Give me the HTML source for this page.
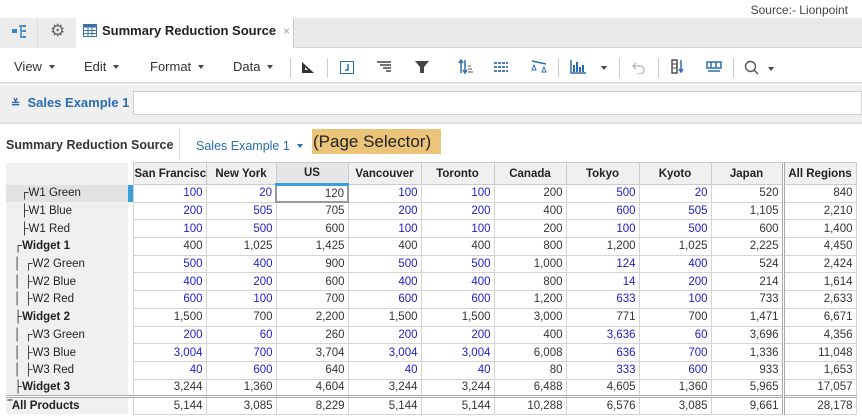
<!DOCTYPE html>
<html><head><meta charset="utf-8"><style>
*{box-sizing:border-box;margin:0;padding:0}
body{width:862px;height:418px;overflow:hidden;background:#fff;font-family:"Liberation Sans",Arial,sans-serif;position:relative;color:#333}
.abs{position:absolute}
.src{right:14px;top:3px;font-size:12px;color:#444}
.tabbar{left:0;top:18px;width:862px;height:30px;background:#e9e9e9;border-bottom:1px solid #d6d6d6}
.toolbar{left:0;top:48px;width:862px;height:36px;border-bottom:2px solid #e0e0e0;background:#fff}
.menu{top:59px;font-size:13px;color:#333}
.caret{display:inline-block;width:0;height:0;border-left:3.5px solid transparent;border-right:3.5px solid transparent;border-top:4px solid #444;margin-left:7px;vertical-align:2px}
.sep{top:58px;width:1px;height:20px;background:#ccc}
.bar2{left:0;top:85px;width:862px;height:39px;background:#efefef;border-bottom:2px solid #e0e0e0}
table{position:absolute;left:6px;top:162px;width:850px;border-collapse:collapse;font-size:11.5px;table-layout:fixed}
td{height:17.7px;padding:0 3px;text-align:right;border:1px solid #d4d4d4;white-space:nowrap;overflow:hidden;color:#333}
td.b{color:#2020c8}
td.l{text-align:left;background:#f0f0f0;border:none;color:#222;padding-left:8px}
tr.h td{background:#f0f0f0;font-weight:bold;text-align:center;height:22px;color:#222;border-color:#ccc;padding:0 1px}
td.w{font-weight:bold}
.ar{border-left:3px double #aaa !important}
</style></head><body>
<div class="abs src">Source:- Lionpoint</div>
<div class="abs tabbar"></div>
<div class="abs" style="left:0;top:18px;width:38px;height:30px;background:#ececec;border-right:1px solid #ddd"></div>
<svg class="abs" style="left:12px;top:25px" width="16" height="14"><rect x="0" y="4" width="5" height="4" fill="#3a86c8"/><path d="M7 1h4M9 1v12M9 6h3M9 12h3" stroke="#3a86c8" stroke-width="1.5" fill="none"/><rect x="11" y="0" width="3" height="2" fill="#3a86c8"/><rect x="11" y="5" width="3" height="2" fill="#3a86c8"/><rect x="11" y="11" width="3" height="2" fill="#3a86c8"/></svg>
<div class="abs" style="left:38px;top:18px;width:38px;height:30px;background:#ececec"></div>
<div class="abs" style="left:50px;top:21px;font-size:17px;color:#666">⚙</div>
<div class="abs" style="left:76px;top:18px;width:218px;height:31px;background:#fff;border-right:1px solid #ccc"></div>
<svg class="abs" style="left:83px;top:24px" width="14" height="13"><rect x="0.5" y="0.5" width="13" height="12" fill="#fff" stroke="#3a72b0"/><rect x="0.5" y="0.5" width="13" height="3" fill="#3a72b0"/><path d="M1 6.5h12M1 9.5h12M5 3v10M9 3v10" stroke="#3a72b0"/></svg>
<div class="abs" style="left:102px;top:23px;font-size:13px;font-weight:bold;color:#222">Summary Reduction Source <span style="color:#aaa;font-weight:normal;font-size:12px">&nbsp;×</span></div>
<div class="abs toolbar"></div>
<div class="abs menu" style="left:14px">View<span class="caret"></span></div>
<div class="abs menu" style="left:84px">Edit<span class="caret"></span></div>
<div class="abs menu" style="left:150px">Format<span class="caret"></span></div>
<div class="abs menu" style="left:233px">Data<span class="caret"></span></div>
<div class="abs sep" style="left:290px"></div>
<svg class="abs" style="left:301px;top:60px" width="14" height="14"><path d="M1 2v11h12z" fill="#333"/><path d="M4 7v3h3z" fill="#fff"/></svg>
<div class="abs sep" style="left:327px"></div>
<svg class="abs" style="left:340px;top:61px" width="14" height="13"><rect x="0.5" y="0.5" width="13" height="12" fill="none" stroke="#2a6db0"/><path d="M8 3v6H5" stroke="#2a6db0" stroke-width="1.5" fill="none"/></svg>
<svg class="abs" style="left:376px;top:61px" width="16" height="12"><path d="M1 1h14M4 4h11M7 7h8M10 10h5" stroke="#444" stroke-width="1.5"/></svg>
<svg class="abs" style="left:415px;top:60px" width="14" height="14"><path d="M0 1h14L9 7v6H5V7z" fill="#444"/></svg>
<svg class="abs" style="left:458px;top:59px" width="16" height="15"><path d="M3 1v13M1 4l2-3 2 3M7 1v13M5 11l2 3 2-3" stroke="#2a6db0" stroke-width="1.5" fill="none"/><path d="M10 7h3M10 10h4M10 13h5" stroke="#555"/></svg>
<svg class="abs" style="left:494px;top:62px" width="14" height="10"><path d="M0 1h14M0 5h14M0 9h14" stroke="#4a7bc0" stroke-width="2" stroke-dasharray="3 1"/></svg>
<svg class="abs" style="left:531px;top:59px" width="16" height="15"><path d="M1 2l14 3" stroke="#2a6db0" stroke-width="1.5"/><path d="M3 6l-2 5h4zM13 8l-2 5h4z" stroke="#2a6db0" fill="none"/></svg>
<div class="abs sep" style="left:558px"></div>
<svg class="abs" style="left:570px;top:59px" width="16" height="15"><path d="M1 1v13h15" stroke="#2a6db0" stroke-width="1.5" fill="none"/><path d="M4 6v7M7 3v10M10 8v5M13 6v7" stroke="#2a6db0" stroke-width="2"/></svg>
<span class="abs caret" style="left:594px;top:66px"></span>
<div class="abs sep" style="left:619px"></div>
<svg class="abs" style="left:632px;top:60px" width="14" height="14"><path d="M4 3l-3 3 3 3M1 6h7a4 4 0 010 8H5" stroke="#bbb" stroke-width="1.4" fill="none"/></svg>
<div class="abs sep" style="left:658px"></div>
<svg class="abs" style="left:671px;top:59px" width="14" height="16"><rect x="1" y="1" width="5" height="13" fill="none" stroke="#444" stroke-width="1.4"/><path d="M1 5h5M1 9h5" stroke="#444"/><path d="M10 1v12M8 10l2 3 2-3" stroke="#2a6db0" stroke-width="1.5" fill="none"/></svg>
<svg class="abs" style="left:706px;top:61px" width="16" height="12"><rect x="1" y="1" width="14" height="6" fill="none" stroke="#2a6db0" stroke-width="1.5"/><path d="M5 1v6M10 1v6M2 10h12" stroke="#2a6db0" stroke-width="1.5"/></svg>
<div class="abs sep" style="left:733px"></div>
<svg class="abs" style="left:744px;top:60px" width="16" height="16"><circle cx="6.5" cy="6.5" r="5" fill="none" stroke="#555" stroke-width="1.4"/><path d="M10 10l4 4" stroke="#555" stroke-width="1.5"/></svg>
<span class="abs caret" style="left:761px;top:67px"></span>
<div class="abs bar2"></div>
<div class="abs" style="left:11px;top:95px;font-size:13px;font-weight:bold;color:#2a6db0"><span style="font-size:11px">≚</span>&nbsp; Sales Example 1</div>
<div class="abs" style="left:133px;top:91px;width:729px;height:24px;background:#fff;border:1px solid #d0d0d0"></div>
<div class="abs" style="left:6px;top:138px;font-size:12.5px;font-weight:bold;color:#333">Summary Reduction Source</div>
<div class="abs" style="left:179px;top:128px;width:1px;height:32px;background:#ddd"></div>
<div class="abs" style="left:196px;top:139px;font-size:12.5px;color:#2a6db0">Sales Example 1<span class="caret" style="border-top-color:#2a6db0"></span></div>
<div class="abs" style="left:312px;top:129px;width:129px;height:25px;background:#ebc47a"></div>
<div class="abs" style="left:313px;top:132px;font-size:17px;color:#222">(Page Selector)</div>
<table>
<colgroup><col style="width:122px"><col style="width:5px"><col style="width:73px"><col style="width:70px"><col style="width:72px"><col style="width:73px"><col style="width:73px"><col style="width:72px"><col style="width:73px"><col style="width:72px"><col style="width:72px"><col style="width:73px"></colgroup>
<tr class="h"><td class="l" style="background:#f0f0f0"></td><td style="border:none;background:#fff;padding:0"></td><td>San Francisc</td><td>New York</td><td style="border-bottom:3px solid #3aa0dc;background:#e6e6e6">US</td><td>Vancouver</td><td>Toronto</td><td>Canada</td><td>Tokyo</td><td>Kyoto</td><td>Japan</td><td class="ar">All Regions</td></tr>
<tr><td class="l" style="background:#e2e2e2">&nbsp;&nbsp;┌W1 Green</td><td style="border:none;background:#3aa0dc;padding:0"></td><td class="b">100</td><td class="b">20</td><td style="border:2px solid #999">120</td><td class="b">100</td><td class="b">100</td><td>200</td><td class="b">500</td><td class="b">20</td><td>520</td><td class="ar">840</td></tr>
<tr><td class="l">&nbsp;&nbsp;├W1 Blue</td><td style="border:none"></td><td class="b">200</td><td class="b">505</td><td>705</td><td class="b">200</td><td class="b">200</td><td>400</td><td class="b">600</td><td class="b">505</td><td>1,105</td><td class="ar">2,210</td></tr>
<tr><td class="l">&nbsp;&nbsp;├W1 Red</td><td style="border:none"></td><td class="b">100</td><td class="b">500</td><td>600</td><td class="b">100</td><td class="b">100</td><td>200</td><td class="b">100</td><td class="b">500</td><td>600</td><td class="ar">1,400</td></tr>
<tr><td class="l w">┌Widget 1</td><td style="border:none"></td><td>400</td><td>1,025</td><td>1,425</td><td>400</td><td>400</td><td>800</td><td>1,200</td><td>1,025</td><td>2,225</td><td class="ar">4,450</td></tr>
<tr><td class="l">│ ┌W2 Green</td><td style="border:none"></td><td class="b">500</td><td class="b">400</td><td>900</td><td class="b">500</td><td class="b">500</td><td>1,000</td><td class="b">124</td><td class="b">400</td><td>524</td><td class="ar">2,424</td></tr>
<tr><td class="l">│ ├W2 Blue</td><td style="border:none"></td><td class="b">400</td><td class="b">200</td><td>600</td><td class="b">400</td><td class="b">400</td><td>800</td><td class="b">14</td><td class="b">200</td><td>214</td><td class="ar">1,614</td></tr>
<tr><td class="l">│ ├W2 Red</td><td style="border:none"></td><td class="b">600</td><td class="b">100</td><td>700</td><td class="b">600</td><td class="b">600</td><td>1,200</td><td class="b">633</td><td class="b">100</td><td>733</td><td class="ar">2,633</td></tr>
<tr><td class="l w">├Widget 2</td><td style="border:none"></td><td>1,500</td><td>700</td><td>2,200</td><td>1,500</td><td>1,500</td><td>3,000</td><td>771</td><td>700</td><td>1,471</td><td class="ar">6,671</td></tr>
<tr><td class="l">│ ┌W3 Green</td><td style="border:none"></td><td class="b">200</td><td class="b">60</td><td>260</td><td class="b">200</td><td class="b">200</td><td>400</td><td class="b">3,636</td><td class="b">60</td><td>3,696</td><td class="ar">4,356</td></tr>
<tr><td class="l">│ ├W3 Blue</td><td style="border:none"></td><td class="b">3,004</td><td class="b">700</td><td>3,704</td><td class="b">3,004</td><td class="b">3,004</td><td>6,008</td><td class="b">636</td><td class="b">700</td><td>1,336</td><td class="ar">11,048</td></tr>
<tr><td class="l">│ ├W3 Red</td><td style="border:none"></td><td class="b">40</td><td class="b">600</td><td>640</td><td class="b">40</td><td class="b">40</td><td>80</td><td class="b">333</td><td class="b">600</td><td>933</td><td class="ar">1,653</td></tr>
<tr><td class="l w">├Widget 3</td><td style="border:none"></td><td>3,244</td><td>1,360</td><td>4,604</td><td>3,244</td><td>3,244</td><td>6,488</td><td>4,605</td><td>1,360</td><td>5,965</td><td class="ar">17,057</td></tr>
<tr style="border-top:3px double #aaa"><td class="l w" style="padding-left:2px">‾All Products</td><td style="border:none"></td><td>5,144</td><td>3,085</td><td>8,229</td><td>5,144</td><td>5,144</td><td>10,288</td><td>6,576</td><td>3,085</td><td>9,661</td><td class="ar">28,178</td></tr>
</table>
</body></html>
